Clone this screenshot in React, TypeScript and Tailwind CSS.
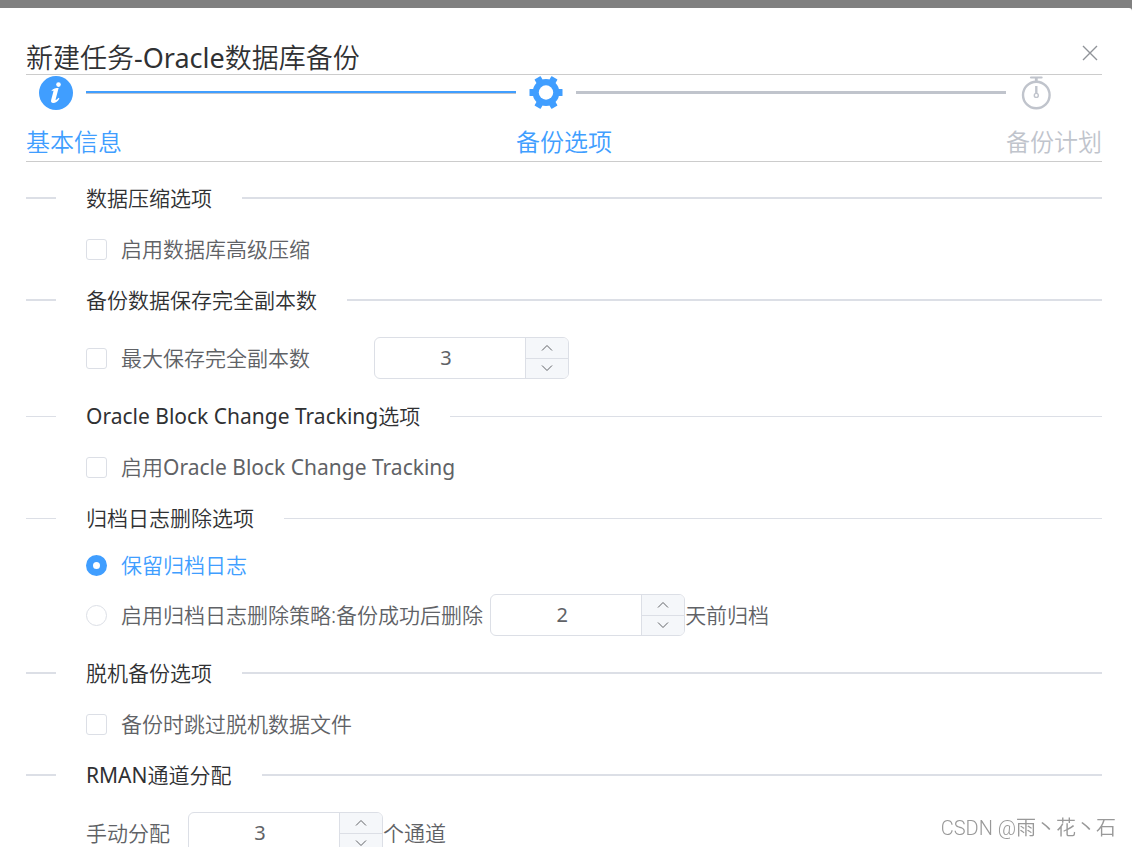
import { useState } from 'react'
import type { ReactNode } from 'react'
import clsx from 'clsx'

function InfoIcon() {
  return (
    <svg width="34" height="34" viewBox="0 0 34 34" aria-hidden="true">
      <circle cx="17" cy="17" r="17" fill="currentColor" />
      <circle cx="19.5" cy="8.6" r="2.3" fill="#fff" />
      <path d="M12.6 14.4C14.4 12.6 16.6 12 19.6 12L16.6 23.4C16.4 24.4 17.2 24.4 19.6 21.8L20.4 22.4C18.4 26 16 27.2 13.8 27C12 26.8 11.8 25.4 12.2 23.8L14.4 15.6C14.6 14.4 14.2 14.2 12.8 15.2Z" fill="#fff" />
    </svg>
  )
}

function GearIcon() {
  return (
    <svg width="34" height="34" viewBox="0 0 34 34" aria-hidden="true">
      <g fill="currentColor">
        <rect x="0.5" y="13" width="33" height="7" rx="0.5" />
        <rect x="0" y="13" width="34" height="7" rx="0.5" transform="rotate(60 17 16.5)" />
        <rect x="0" y="13" width="34" height="7" rx="0.5" transform="rotate(120 17 16.5)" />
        <circle cx="17" cy="16.5" r="13.4" />
      </g>
      <circle cx="17" cy="16.5" r="7.2" fill="#fff" />
    </svg>
  )
}

function StopwatchIcon() {
  return (
    <svg width="34" height="34" viewBox="0 0 34 34" fill="none" stroke="currentColor" aria-hidden="true">
      <circle cx="17.3" cy="19" r="13.3" strokeWidth="2.4" />
      <path d="M12 1.5H22.6" strokeWidth="2.2" strokeLinecap="round" />
      <path d="M17.3 2V6" strokeWidth="2.8" />
      <path d="M17.3 10V18" strokeWidth="2.4" />
      <circle cx="17.3" cy="19.4" r="2" strokeWidth="1.4" />
    </svg>
  )
}

function Chevron({ down = false }: { down?: boolean }) {
  return (
    <svg width="12" height="8" viewBox="0 0 12 8" fill="none" stroke="#606266" aria-hidden="true">
      <path d={down ? 'M1 1.5L6 6.5L11 1.5' : 'M1 6.5L6 1.5L11 6.5'} />
    </svg>
  )
}

function Step({ icon, label, status, last = false }: { icon: ReactNode; label: string; status: 'done' | 'active' | 'wait'; last?: boolean }) {
  return (
    <li className={clsx(last ? 'flex-none' : 'flex-1', status === 'wait' ? 'text-[#c0c4cc]' : 'text-[#409eff]')}>
      <div className="flex h-[35px] items-center">
        {/* icon */}
        <div className="flex w-[60px] shrink-0 justify-center">{icon}</div>
        {/* connector */}
        {!last && (
          <div className="h-[3px] flex-1 bg-[#c0c4cc]">
            {status === 'done' && <div className="h-[2px] bg-[#409eff]" />}
          </div>
        )}
      </div>
      <div className="mt-4 text-2xl leading-8 whitespace-nowrap">{label}</div>
    </li>
  )
}

function Section({ title, thin = false, children }: { title: ReactNode; thin?: boolean; children: ReactNode }) {
  const line = clsx('bg-[#dcdfe6]', thin ? 'h-px' : 'h-[2px]')
  return (
    <section>
      <div className="flex h-8 items-center gap-[30px]">
        <div className={clsx(line, 'w-[30px]')} />
        <h2 className="text-[#303133]">{title}</h2>
        <div className={clsx(line, 'flex-1')} />
      </div>
      <div className="pl-[60px]">{children}</div>
    </section>
  )
}

function Checkbox({ children }: { children: ReactNode }) {
  return (
    <label className="flex items-center gap-[14px]">
      <input type="checkbox" className="size-[21px] appearance-none rounded-[3px] border border-[#dcdfe6] bg-white checked:border-[#409eff] checked:bg-[#409eff]" />
      <span>{children}</span>
    </label>
  )
}

function Radio({ label, checked, onChange }: { label: string; checked: boolean; onChange: () => void }) {
  return (
    <label className={clsx('flex items-center gap-[14px]', checked && 'text-[#409eff]')}>
      <input
        type="radio"
        name="archive"
        checked={checked}
        onChange={onChange}
        className="size-[21px] appearance-none rounded-full border border-[#dcdfe6] bg-white checked:border-[7px] checked:border-[#409eff]"
      />
      {label}
    </label>
  )
}

function NumberInput({ label, initial }: { label: string; initial: number }) {
  const [value, setValue] = useState(initial)
  return (
    <div className="flex h-[42px] w-[195px] overflow-hidden rounded-md border border-[#dcdfe6] bg-white">
      <input
        type="text"
        inputMode="numeric"
        aria-label={label}
        value={value}
        onChange={(e) => setValue(Number(e.target.value) || 0)}
        className="w-0 flex-1 pr-2 text-center text-xl font-normal outline-none"
      />
      <div className="flex w-[43px] flex-col divide-y divide-[#dcdfe6] border-l border-[#dcdfe6] bg-[#f5f7fa]">
        <button type="button" aria-label="+" onClick={() => setValue(value + 1)} className="flex flex-1 items-center justify-center">
          <Chevron />
        </button>
        <button type="button" aria-label="-" onClick={() => setValue(Math.max(0, value - 1))} className="flex flex-1 items-center justify-center">
          <Chevron down />
        </button>
      </div>
    </div>
  )
}

export default function App() {
  const [keep, setKeep] = useState(true)

  return (
    <div className="h-screen overflow-hidden bg-[#808080] pt-2 font-['Noto_Sans','Noto_Sans_CJK_SC',sans-serif] font-[350]">
      <main className="min-h-full rounded-tr-[3px] bg-white pr-[30px] pl-[26px] text-[21px] leading-[30px] text-[#606266]">
        {/* Header */}
        <header className="flex items-start justify-between border-b border-[#cccccc] pt-[33px]">
          <h1 className="text-[27px] leading-[33px] text-[#303133]">
            新建任务<span className="font-normal">-Oracle</span>数据库备份
          </h1>
          <button type="button" aria-label="×" className="flex size-6 items-center justify-center">
            <svg width="16" height="16" viewBox="0 0 16 16" stroke="#909399" strokeWidth="1.4" aria-hidden="true">
              <path d="M1 1L15 15M15 1L1 15" />
            </svg>
          </button>
        </header>

        {/* Steps */}
        <ol className="flex border-b border-[#cccccc] pb-[3px]">
          <Step icon={<InfoIcon />} label="基本信息" status="done" />
          <Step icon={<GearIcon />} label="备份选项" status="active" />
          <Step icon={<StopwatchIcon />} label="备份计划" status="wait" last />
        </ol>

        {/* Options */}
        <form className="pt-5">
          <Section title="数据压缩选项">
            <div className="flex py-5">
              <Checkbox>启用数据库高级压缩</Checkbox>
            </div>
          </Section>

          <Section title="备份数据保存完全副本数">
            <div className="flex items-center gap-16 py-[21px]">
              <Checkbox>最大保存完全副本数</Checkbox>
              <NumberInput label="最大保存完全副本数" initial={3} />
            </div>
          </Section>

          <Section title={<><span className="font-normal">Oracle Block Change Tracking</span>选项</>} thin>
            <div className="flex py-5">
              <Checkbox>
                启用<span className="font-normal">Oracle Block Change Tracking</span>
              </Checkbox>
            </div>
          </Section>

          <Section title="归档日志删除选项" thin>
            <div className="flex flex-col gap-[14px] pt-4 pb-[21px]">
              <div className="flex">
                <Radio label="保留归档日志" checked={keep} onChange={() => setKeep(true)} />
              </div>
              <div className="flex items-center">
                <Radio label="启用归档日志删除策略:备份成功后删除" checked={!keep} onChange={() => setKeep(false)} />
                <div className="ml-[7px]">
                  <NumberInput label="天前归档" initial={2} />
                </div>
                <span>天前归档</span>
              </div>
            </div>
          </Section>

          <Section title="脱机备份选项">
            <div className="flex py-5">
              <Checkbox>备份时跳过脱机数据文件</Checkbox>
            </div>
          </Section>

          <Section title={<><span className="font-normal">RMAN</span>通道分配</>}>
            <div className="flex items-center py-[21px]">
              <span className="mr-[18px]">手动分配</span>
              <NumberInput label="手动分配" initial={3} />
              <span>个通道</span>
            </div>
          </Section>
        </form>
      </main>

      {/* Watermark */}
      <div className="fixed right-4 bottom-1 font-[Roboto,'Noto_Sans_CJK_SC',sans-serif] text-xl leading-[30px] text-[#999999]">
        CSDN @雨丶花丶石
      </div>
    </div>
  )
}
